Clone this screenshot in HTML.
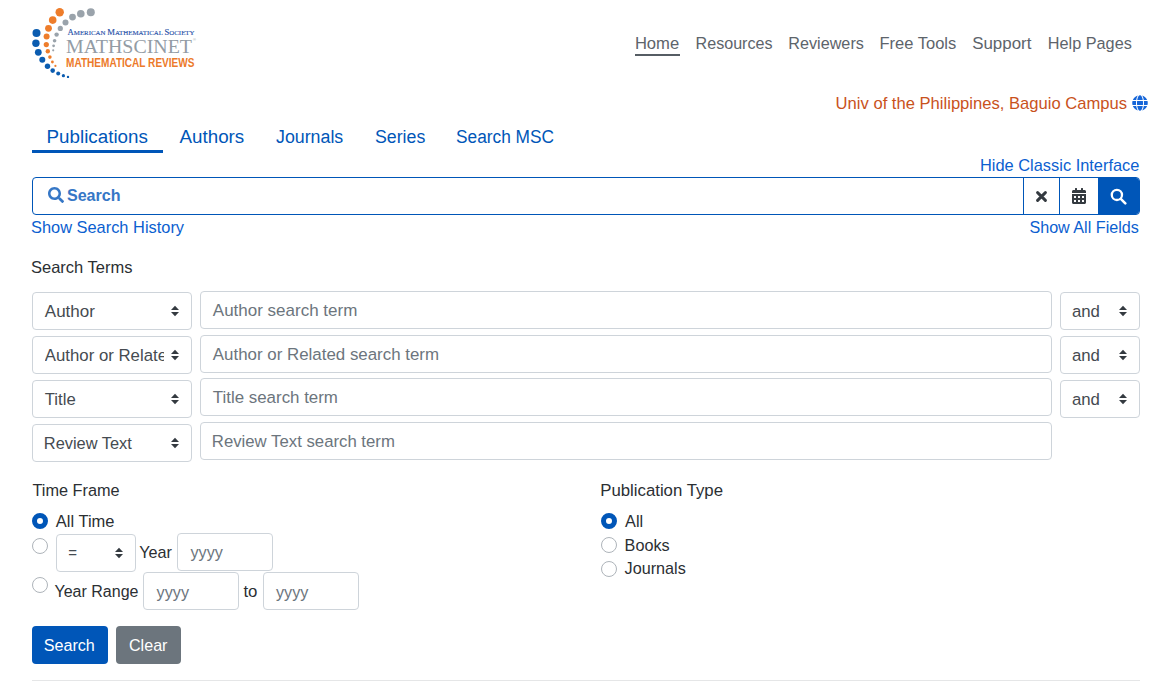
<!DOCTYPE html>
<html><head><meta charset="utf-8">
<style>
*{box-sizing:border-box;margin:0;padding:0}
html,body{width:1176px;height:696px;overflow:hidden;background:#fff}
body{position:relative;font-family:"Liberation Sans",sans-serif;font-size:16.5px;color:#212529}
.a{position:absolute;white-space:nowrap;line-height:24px}
.box{position:absolute;border:1px solid #ced4da;border-radius:4px;background:#fff}
.arr{position:absolute;width:8px;height:12px}
.radio{position:absolute;width:16px;height:16px;border-radius:50%;border:1px solid #aeb4ba;background:#fff}
.radio.on{border:5px solid #0056b8;background:#fff}
</style></head><body>
<svg style="position:absolute;left:0;top:0" width="200" height="85" viewBox="0 0 200 85">
<g fill="#0b5cb0">
<circle cx="36.5" cy="33" r="4"/><circle cx="35.9" cy="43.3" r="3.7"/><circle cx="38.3" cy="52.3" r="3.4"/>
<circle cx="42.3" cy="59.8" r="3"/><circle cx="47.5" cy="66.3" r="2.7"/><circle cx="52.7" cy="70.6" r="2.3"/>
<circle cx="58.2" cy="73.6" r="2"/><circle cx="63.4" cy="75.7" r="1.6"/><circle cx="68" cy="76.9" r="1.2"/>
</g>
<g fill="#ee7d2b">
<circle cx="59.7" cy="12.2" r="4.2"/><circle cx="52.7" cy="20.1" r="3.8"/><circle cx="48.5" cy="28.3" r="3.4"/>
<circle cx="46.6" cy="36.6" r="3"/><circle cx="46.3" cy="44.6" r="2.6"/><circle cx="47.8" cy="51.3" r="2.2"/>
<circle cx="49.9" cy="57.1" r="1.8"/><circle cx="52.4" cy="62" r="1.4"/><circle cx="55.4" cy="65.9" r="1.1"/>
</g>
<g fill="#9aa3ab">
<circle cx="90.8" cy="12.2" r="4"/><circle cx="80.8" cy="13.7" r="3.8"/><circle cx="72.5" cy="17.1" r="3.4"/>
<circle cx="65.5" cy="22.6" r="3"/><circle cx="60.3" cy="28.4" r="2.6"/><circle cx="56.6" cy="34.6" r="2.2"/>
<circle cx="54.6" cy="40.7" r="1.8"/><circle cx="53.6" cy="45.8" r="1.4"/><circle cx="53.2" cy="50.3" r="1.1"/>
</g>
<text x="67.5" y="35" fill="#1f4fa8" stroke="#1f4fa8" stroke-width="0.12" font-family="Liberation Serif" font-size="6.1" textLength="127" lengthAdjust="spacingAndGlyphs"><tspan font-size="7.7">A</tspan>MERICAN <tspan font-size="7.7">M</tspan>ATHEMATICAL <tspan font-size="7.7">S</tspan>OCIETY</text>
<text x="66" y="53.3" fill="#939ca5" font-family="Liberation Serif" font-size="18" textLength="126" lengthAdjust="spacingAndGlyphs">MATHSCINET</text>
<text x="193" y="41" fill="#9aa3ab" font-family="Liberation Sans" font-size="4">&#174;</text>
<text x="66" y="66.7" fill="#ec7a2a" font-family="Liberation Sans" font-weight="bold" font-size="12.1" textLength="128.5" lengthAdjust="spacingAndGlyphs">MATHEMATICAL REVIEWS</text>
</svg>
<div class="a" style="left:634.90px;top:32px;font-size:16.6px;color:#5d646b;font-weight:400;">Home</div>
<div style="position:absolute;left:635px;top:54px;width:45px;height:2px;background:#565d64"></div>
<div class="a" style="left:695.60px;top:31px;font-size:16.1px;color:#5d646b;font-weight:400;">Resources</div>
<div class="a" style="left:788.30px;top:31px;font-size:16.2px;color:#5d646b;font-weight:400;">Reviewers</div>
<div class="a" style="left:879.50px;top:31px;font-size:16.5px;color:#5d646b;font-weight:400;">Free Tools</div>
<div class="a" style="left:972.20px;top:32px;font-size:16.9px;color:#5d646b;font-weight:400;">Support</div>
<div class="a" style="left:1047.80px;top:31px;font-size:16.26px;color:#5d646b;font-weight:400;">Help Pages</div>
<div class="a" style="left:835.60px;top:92px;font-size:16.6px;color:#c9521c;font-weight:400;">Univ of the Philippines, Baguio Campus</div>
<svg style="position:absolute;left:1132px;top:95px" width="16" height="16" viewBox="0 0 496 512"><path fill="#1565d8" d="M336.5 160C322 70.7 287.8 8 248 8s-74 62.7-88.5 152h177zM152 256c0 22.2 1.2 43.5 3.3 64h185.3c2.1-20.5 3.3-41.8 3.3-64s-1.2-43.5-3.3-64H155.3c-2.1 20.5-3.3 41.8-3.3 64zm324.7-96c-28.6-67.9-86.5-120.4-158-141.6 24.4 33.8 41.2 84.7 50 141.6h108zM177.2 18.4C105.8 39.6 47.8 92.1 19.3 160h108c8.7-56.9 25.5-107.8 49.9-141.6zM487.4 192H372.7c2.1 21 3.3 42.5 3.3 64s-1.2 43-3.3 64h114.6c5.5-20.5 8.6-41.8 8.6-64s-3.1-43.5-8.5-64zM120 256c0-21.5 1.2-43 3.3-64H8.6C3.2 212.5 0 233.8 0 256s3.2 43.5 8.6 64h114.6c-2-21-3.2-42.5-3.2-64zm39.5 96c14.5 89.3 48.7 152 88.5 152s74-62.7 88.5-152h-177zm159.3 141.6c71.4-21.2 129.4-73.7 158-141.6h-108c-8.8 56.9-25.6 107.8-50 141.6zM19.3 352c28.6 67.9 86.5 120.4 158 141.6-24.4-33.8-41.2-84.7-50-141.6h-108z"/></svg>
<div class="a" style="left:46.60px;top:125px;font-size:18.8px;color:#0056b8;font-weight:400;">Publications</div>
<div class="a" style="left:179.50px;top:125px;font-size:18.8px;color:#0056b8;font-weight:400;">Authors</div>
<div class="a" style="left:275.70px;top:125px;font-size:18.8px;color:#0056b8;font-weight:400;transform:scaleX(0.947);transform-origin:0 0;">Journals</div>
<div class="a" style="left:374.70px;top:125px;font-size:18.8px;color:#0056b8;font-weight:400;transform:scaleX(0.945);transform-origin:0 0;">Series</div>
<div class="a" style="left:455.70px;top:125px;font-size:18.8px;color:#0056b8;font-weight:400;transform:scaleX(0.92);transform-origin:0 0;">Search MSC</div>
<div style="position:absolute;left:32px;top:150px;width:131px;height:3px;background:#0056b8"></div>
<div class="a" style="left:980.00px;top:153px;font-size:16.4px;color:#0b60d0;font-weight:400;">Hide Classic Interface</div>
<div style="position:absolute;left:32px;top:177px;width:1108px;height:38px;border:1px solid #0056b8;border-radius:4px;overflow:hidden;background:#fff">
<div style="position:absolute;left:990px;top:-1px;width:1px;height:38px;background:#0056b8"></div>
<div style="position:absolute;left:1026px;top:-1px;width:1px;height:38px;background:#0056b8"></div>
<div style="position:absolute;left:1065px;top:-1px;width:43px;height:38px;background:#0056b8"></div>
</div>
<svg style="position:absolute;left:48px;top:187px" width="16" height="16" viewBox="0 0 512 512"><path fill="#3677c6" d="M505 442.7L405.3 343c-4.5-4.5-10.6-7-17-7H372c27.6-35.3 44-79.7 44-128C416 93.1 322.9 0 208 0S0 93.1 0 208s93.1 208 208 208c48.3 0 92.7-16.4 128-44v16.3c0 6.4 2.5 12.5 7 17l99.7 99.7c9.4 9.4 24.6 9.4 33.9 0l28.3-28.3c9.4-9.4 9.4-24.6.1-34zM208 336c-70.7 0-128-57.2-128-128 0-70.7 57.2-128 128-128 70.7 0 128 57.2 128 128 0 70.7-57.2 128-128 128z"/></svg>
<div class="a" style="left:66.90px;top:183px;font-size:16.1px;color:#3677c6;font-weight:700;">Search</div>
<svg style="position:absolute;left:1036px;top:190.5px" width="11" height="11" viewBox="0 0 11 11"><path d="M1.6 1.6 L9.4 9.4 M9.4 1.6 L1.6 9.4" stroke="#343a40" stroke-width="2.9" stroke-linecap="round"/></svg>
<svg style="position:absolute;left:1072px;top:188px" width="14" height="16" viewBox="0 0 448 512"><path fill="#343a40" d="M0 464c0 26.5 21.5 48 48 48h352c26.5 0 48-21.5 48-48V192H0v272zm320-196c0-6.6 5.4-12 12-12h40c6.6 0 12 5.4 12 12v40c0 6.6-5.4 12-12 12h-40c-6.6 0-12-5.4-12-12v-40zm0 128c0-6.6 5.4-12 12-12h40c6.6 0 12 5.4 12 12v40c0 6.6-5.4 12-12 12h-40c-6.6 0-12-5.4-12-12v-40zM192 268c0-6.6 5.4-12 12-12h40c6.6 0 12 5.4 12 12v40c0 6.6-5.4 12-12 12h-40c-6.6 0-12-5.4-12-12v-40zm0 128c0-6.6 5.4-12 12-12h40c6.6 0 12 5.4 12 12v40c0 6.6-5.4 12-12 12h-40c-6.6 0-12-5.4-12-12v-40zM64 268c0-6.6 5.4-12 12-12h40c6.6 0 12 5.4 12 12v40c0 6.6-5.4 12-12 12H76c-6.6 0-12-5.4-12-12v-40zm0 128c0-6.6 5.4-12 12-12h40c6.6 0 12 5.4 12 12v40c0 6.6-5.4 12-12 12H76c-6.6 0-12-5.4-12-12v-40zM400 64h-48V16c0-8.8-7.2-16-16-16h-32c-8.8 0-16 7.2-16 16v48H160V16c0-8.8-7.2-16-16-16h-32c-8.8 0-16 7.2-16 16v48H48C21.5 64 0 85.5 0 112v48h448v-48c0-26.5-21.5-48-48-48z"/></svg>
<svg style="position:absolute;left:1110px;top:187.5px" width="17" height="17" viewBox="0 0 17 17"><circle cx="6.9" cy="6.9" r="5.1" fill="none" stroke="#fff" stroke-width="2.3"/><path d="M10.8 10.8 L15.3 15.3" stroke="#fff" stroke-width="2.6" stroke-linecap="round"/></svg>
<div class="a" style="left:31.00px;top:215px;font-size:16.4px;color:#0b60d0;font-weight:400;">Show Search History</div>
<div class="a" style="left:1029.40px;top:215px;font-size:16.15px;color:#0b60d0;font-weight:400;">Show All Fields</div>
<div class="a" style="left:31.00px;top:255px;font-size:16.5px;color:#2b2f33;font-weight:400;">Search Terms</div>
<div class="box" style="left:32px;top:292px;width:160px;height:38px;"></div>
<div class="box" style="left:32px;top:336px;width:160px;height:38px;"></div>
<div class="box" style="left:32px;top:380px;width:160px;height:38px;"></div>
<div class="box" style="left:32px;top:424px;width:160px;height:38px;"></div>
<div class="box" style="left:200px;top:291px;width:852px;height:38px;"></div>
<div class="box" style="left:200px;top:334.6px;width:852px;height:38px;"></div>
<div class="box" style="left:200px;top:378.3px;width:852px;height:38px;"></div>
<div class="box" style="left:200px;top:422px;width:852px;height:38px;"></div>
<div class="box" style="left:1060px;top:292px;width:80px;height:38px;"></div>
<div class="box" style="left:1060px;top:336px;width:80px;height:38px;"></div>
<div class="box" style="left:1060px;top:380px;width:80px;height:38px;"></div>
<div class="a" style="left:44.80px;top:300px;font-size:17.0px;color:#454b51;font-weight:400;">Author</div>
<div class="a" style="left:44.80px;top:344px;font-size:16.8px;color:#454b51;font-weight:400;width:119px;overflow:hidden;">Author or Related</div>
<div class="a" style="left:44.80px;top:388px;font-size:16.7px;color:#454b51;font-weight:400;">Title</div>
<div class="a" style="left:43.80px;top:431px;font-size:16.4px;color:#454b51;font-weight:400;">Review Text</div>
<div class="a" style="left:212.80px;top:299px;font-size:17.0px;color:#6c757d;font-weight:400;">Author search term</div>
<div class="a" style="left:212.80px;top:343px;font-size:16.9px;color:#6c757d;font-weight:400;">Author or Related search term</div>
<div class="a" style="left:212.80px;top:386px;font-size:16.9px;color:#6c757d;font-weight:400;">Title search term</div>
<div class="a" style="left:211.80px;top:430px;font-size:16.75px;color:#6c757d;font-weight:400;">Review Text search term</div>
<div class="a" style="left:1071.90px;top:300px;font-size:16.8px;color:#454b51;font-weight:400;">and</div>
<div class="a" style="left:1071.90px;top:344px;font-size:16.8px;color:#454b51;font-weight:400;">and</div>
<div class="a" style="left:1071.90px;top:388px;font-size:16.8px;color:#454b51;font-weight:400;">and</div>
<div class="a" style="left:32.50px;top:478px;font-size:16.3px;color:#2b2f33;font-weight:400;">Time Frame</div>
<div class="radio on" style="left:32px;top:513px"></div>
<div class="a" style="left:55.80px;top:509px;font-size:16.5px;color:#2b2f33;font-weight:400;">All Time</div>
<div class="radio" style="left:32px;top:537.5px"></div>
<div class="box" style="left:56px;top:534px;width:80px;height:38px;"></div>
<div class="a" style="left:68.30px;top:541px;font-size:15px;color:#454b51;font-weight:400;">=</div>
<div class="a" style="left:139.20px;top:540px;font-size:16.2px;color:#2b2f33;font-weight:400;">Year</div>
<div class="box" style="left:177px;top:533px;width:96px;height:38px;"></div>
<div class="a" style="left:190.50px;top:540px;font-size:16.2px;color:#6c757d;font-weight:400;">yyyy</div>
<div class="radio" style="left:32px;top:576.5px"></div>
<div class="a" style="left:54.50px;top:580px;font-size:16.0px;color:#2b2f33;font-weight:400;">Year Range</div>
<div class="box" style="left:143px;top:572px;width:96px;height:38px;"></div>
<div class="a" style="left:156.60px;top:580px;font-size:16.2px;color:#6c757d;font-weight:400;">yyyy</div>
<div class="a" style="left:243.40px;top:580px;font-size:16.8px;color:#2b2f33;font-weight:400;">to</div>
<div class="box" style="left:263px;top:572px;width:96px;height:38px;"></div>
<div class="a" style="left:276.00px;top:580px;font-size:16.2px;color:#6c757d;font-weight:400;">yyyy</div>
<div class="a" style="left:600.20px;top:479px;font-size:16.8px;color:#2b2f33;font-weight:400;">Publication Type</div>
<div class="radio on" style="left:601px;top:513px"></div>
<div class="a" style="left:625.10px;top:509px;font-size:16.3px;color:#2b2f33;font-weight:400;">All</div>
<div class="radio" style="left:601px;top:537px"></div>
<div class="a" style="left:624.60px;top:533px;font-size:16.2px;color:#2b2f33;font-weight:400;">Books</div>
<div class="radio" style="left:601px;top:561px"></div>
<div class="a" style="left:624.60px;top:556px;font-size:16.2px;color:#2b2f33;font-weight:400;">Journals</div>
<div style="position:absolute;left:32px;top:626px;width:76px;height:38px;background:#0056b8;border-radius:4px"></div>
<div class="a" style="left:43.70px;top:633px;font-size:16.15px;color:#fff;font-weight:400;">Search</div>
<div style="position:absolute;left:116px;top:626px;width:65px;height:38px;background:#6c757d;border-radius:4px"></div>
<div class="a" style="left:129.00px;top:633px;font-size:16.1px;color:#fff;font-weight:400;">Clear</div>
<div style="position:absolute;left:32px;top:680px;width:1108px;height:1px;background:#e5e6e7"></div>
<svg class="arr" style="left:171px;top:305px" width="8" height="12" viewBox="0 0 8 12"><path fill="#343a40" d="M4 0.8L8 5H0z M0 7H8L4 11.2z"/></svg>
<svg class="arr" style="left:171px;top:349px" width="8" height="12" viewBox="0 0 8 12"><path fill="#343a40" d="M4 0.8L8 5H0z M0 7H8L4 11.2z"/></svg>
<svg class="arr" style="left:171px;top:393px" width="8" height="12" viewBox="0 0 8 12"><path fill="#343a40" d="M4 0.8L8 5H0z M0 7H8L4 11.2z"/></svg>
<svg class="arr" style="left:171px;top:437px" width="8" height="12" viewBox="0 0 8 12"><path fill="#343a40" d="M4 0.8L8 5H0z M0 7H8L4 11.2z"/></svg>
<svg class="arr" style="left:1119px;top:305px" width="8" height="12" viewBox="0 0 8 12"><path fill="#343a40" d="M4 0.8L8 5H0z M0 7H8L4 11.2z"/></svg>
<svg class="arr" style="left:1119px;top:349px" width="8" height="12" viewBox="0 0 8 12"><path fill="#343a40" d="M4 0.8L8 5H0z M0 7H8L4 11.2z"/></svg>
<svg class="arr" style="left:1119px;top:393px" width="8" height="12" viewBox="0 0 8 12"><path fill="#343a40" d="M4 0.8L8 5H0z M0 7H8L4 11.2z"/></svg>
<svg class="arr" style="left:115px;top:547px" width="8" height="12" viewBox="0 0 8 12"><path fill="#343a40" d="M4 0.8L8 5H0z M0 7H8L4 11.2z"/></svg>
</body></html>
